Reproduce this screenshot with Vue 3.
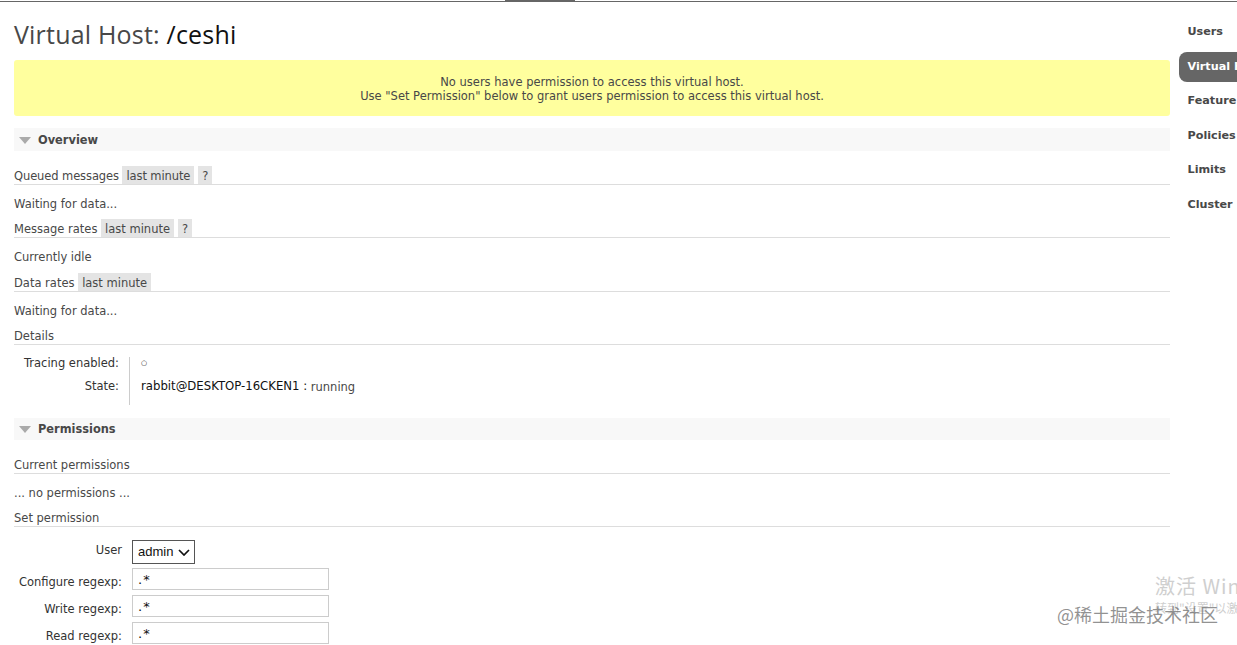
<script setup>
import { ref } from 'vue';

// Menú lateral y formulario de permisos
const menu = ['Users', 'Virtual Hosts', 'Feature Flags', 'Policies', 'Limits', 'Cluster'];
const activo = ref('Virtual Hosts');
const regexps = ['Configure regexp:', 'Write regexp:', 'Read regexp:'];
</script>

<template>
  <div class="pagina">
    <div class="barra-superior"><span class="pestana"></span></div>

    <div class="cuerpo">
      <main class="contenido">
        <h1>Virtual Host: <b>/ceshi</b></h1>

        <div class="aviso">
          No users have permission to access this virtual host.<br />
          Use "Set Permission" below to grant users permission to access this virtual host.
        </div>

        <h2 class="seccion"><span class="flecha"></span>Overview</h2>

        <h3 class="primero">Queued messages <span class="chip">last minute</span><span class="chip ayuda">?</span></h3>
        <p>Waiting for data...</p>
        <h3 class="t2">Message rates <span class="chip">last minute</span><span class="chip ayuda">?</span></h3>
        <p>Currently idle</p>
        <h3 class="t3">Data rates <span class="chip">last minute</span></h3>
        <p>Waiting for data...</p>
        <h3 class="t4">Details</h3>

        <div class="detalles">
          <div class="etiquetas">
            <span>Tracing enabled:</span>
            <span>State:</span>
          </div>
          <div class="valores">
            <span class="circulo">○</span>
            <span><span class="nodo">rabbit@DESKTOP-16CKEN1 :</span> <span class="estado">running</span></span>
          </div>
        </div>

        <h2 class="seccion permisos"><span class="flecha"></span>Permissions</h2>

        <h3 class="actual">Current permissions</h3>
        <p>... no permissions ...</p>
        <h3 class="t5">Set permission</h3>

        <form class="formulario" @submit.prevent>
          <div class="fila fila-usuario">
            <label>User</label>
            <div class="selector">
              <select><option>admin</option></select>
              <svg class="chevron" width="12" height="7" viewBox="0 0 12 7">
                <path d="M1 1l5 5 5-5" fill="none" stroke="#111" stroke-width="1.7" />
              </svg>
            </div>
          </div>
          <div v-for="r in regexps" :key="r" class="fila">
            <label>{{ r }}</label>
            <input type="text" value=".*" />
          </div>
        </form>
      </main>

      <nav class="lateral">
        <a v-for="m in menu" :key="m" :class="{ activo: m === activo }">{{ m }}</a>
      </nav>
    </div>

    <div class="marca-win">
      <div class="win-1">激活 Windows</div>
      <div class="win-2">转到"设置"以激活 Windows。</div>
    </div>
    <div class="marca-juejin">@稀土掘金技术社区</div>
  </div>
</template>

<style scoped>
.pagina {
  position: relative;
  width: 1237px;
  height: 645px;
  overflow: hidden;
  background: #fff;
  color: #484848;
  font: 11.5px/14px "DejaVu Sans", Verdana, sans-serif;
}

.barra-superior {
  height: 1px;
  margin-top: 1px;
  background: #666;
  padding-left: 505px;
}
.pestana {
  display: block;
  width: 70px;
  height: 2px;
  position: relative;
  top: -1px;
  background: #666;
}

.cuerpo {
  display: flex;
  align-items: flex-start;
}

.contenido {
  width: 1156px;
  margin-left: 14px;
  flex: none;
}

h1 {
  margin: 18px 0 0;
  font-size: 25px;
  line-height: 29px;
  font-weight: normal;
  font-family: "Open Sans", "DejaVu Sans", sans-serif;
  letter-spacing: 0.2px;
  color: #484848;
}
h1 b {
  font-weight: normal;
  color: #111;
}

.aviso {
  margin-top: 11px;
  height: 56px;
  box-sizing: border-box;
  padding-top: 15px;
  background: #ffff9e;
  border-radius: 3px;
  text-align: center;
  line-height: 14px;
}

.seccion {
  margin: 12px 0 0;
  height: 23px;
  box-sizing: border-box;
  padding-top: 1px;
  display: flex;
  align-items: center;
  background: #f8f8f8;
  font-size: 11.4px;
  font-weight: bold;
  color: #484848;
}
.permisos {
  margin-top: 13px;
  height: 22px;
  padding-top: 0;
}
.flecha {
  width: 0;
  height: 0;
  margin: 0 7px 0 5px;
  border-left: 6px solid transparent;
  border-right: 6px solid transparent;
  border-top: 7px solid #aaa;
}

h3 {
  margin: 0;
  height: 18px;
  line-height: 20px;
  font-size: 11.5px;
  font-weight: normal;
  border-bottom: 1px solid #ddd;
}
.primero { margin-top: 15px; letter-spacing: -0.1px; }
.actual { margin-top: 15px; }
.t2 { margin-top: 7px; }
.t3 { margin-top: 8px; }
.t4 { margin-top: 7px; }
.t5 { margin-top: 7px; }

.chip {
  display: inline-block;
  height: 18px;
  padding: 0 4px;
  background: #e4e4e4;
  vertical-align: top;
}
.ayuda {
  margin-left: 4px;
}

p {
  margin: 0;
  height: 14px;
  padding: 12px 0 1px;
}

.detalles {
  display: flex;
  margin: 12px 0 0 9px;
  height: 48px;
}
.etiquetas {
  width: 96px;
  margin-top: -1px;
  padding-right: 10px;
  display: flex;
  flex-direction: column;
  align-items: flex-end;
  gap: 9px;
  color: #333;
}
.valores {
  border-left: 1px solid #ccc;
  padding-left: 11px;
  display: flex;
  flex-direction: column;
  gap: 9px;
}
.circulo {
  margin-top: -1px;
  font-size: 7px;
  color: #222;
}
.nodo {
  font-size: 11.7px;
  color: #111;
}
.estado {
  position: relative;
  top: 1px;
  color: #484848;
}

.formulario {
  margin-top: 13px;
  display: flex;
  flex-direction: column;
  gap: 5px;
}
.fila {
  display: flex;
  align-items: center;
  height: 22px;
}
.fila label {
  width: 108px;
  text-align: right;
  margin-right: 10px;
  flex: none;
  color: #333;
  position: relative;
  top: 3px;
}
.fila-usuario {
  height: 24px;
  margin-bottom: -1px;
}
.fila-usuario label {
  top: -2px;
}
.selector {
  position: relative;
  width: 63px;
  height: 24px;
}
select {
  appearance: none;
  display: block;
  width: 63px;
  height: 24px;
  padding: 0 0 2px 5px;
  border: 1px solid #555;
  border-radius: 0;
  background: #fff;
  color: #111;
  font: 13px "Liberation Sans", Arial, sans-serif;
}
.chevron {
  position: absolute;
  left: 46px;
  top: 9px;
  pointer-events: none;
}
input {
  width: 197px;
  height: 22px;
  box-sizing: border-box;
  padding: 0 5px;
  border: 1px solid #ccc;
  color: #111;
  font: 13px "DejaVu Sans", sans-serif;
  letter-spacing: 1px;
  outline: none;
}

.lateral {
  flex: none;
  margin-left: 9px;
  margin-top: 15px;
  width: 58px;
  display: flex;
  flex-direction: column;
  overflow: hidden;
}
.lateral a {
  display: block;
  height: 30px;
  margin-bottom: 4.5px;
  padding-left: 8.5px;
  line-height: 30px;
  white-space: nowrap;
  overflow: hidden;
  font-weight: bold;
  font-size: 11.2px;
  color: #484848;
  border-radius: 8px 0 0 8px;
}
.lateral a.activo {
  background: #666;
  color: #fff;
}

.marca-win {
  position: absolute;
  left: 1155px;
  top: 572px;
  white-space: nowrap;
  color: #cfcfcf;
  font-family: "Noto Sans CJK SC", sans-serif;
}
.win-1 {
  font-size: 20px;
  line-height: 27px;
  letter-spacing: 1px;
}
.win-2 {
  font-size: 12px;
  line-height: 15px;
  margin-top: 1px;
}

.marca-juejin {
  position: absolute;
  left: 1057px;
  top: 602px;
  white-space: nowrap;
  font: 18px/24px "Noto Sans CJK SC", sans-serif;
  color: rgba(110, 110, 110, 0.75);
}
</style>
<style>
html, body {
  margin: 0;
  overflow: hidden;
}
</style>
